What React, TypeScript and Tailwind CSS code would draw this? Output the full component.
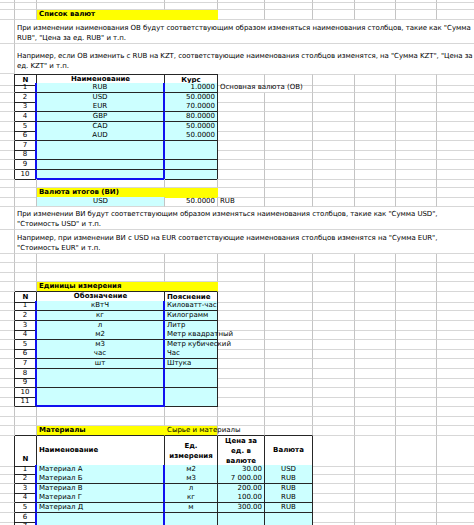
import React from 'react';
import { twMerge } from 'tailwind-merge';

const GRID = 'grid grid-cols-[15px_22px_128px_53px_47px_48px_42px_41px_41px_41px] w-[478px] shrink-0';
const BASE =
  'border-r border-b border-r-[#c4c4c4] border-b-[#d7d7d7] flex items-end px-[2px] whitespace-nowrap leading-[9px] min-w-0';

const DK_R = 'border-r-[#262626]';
const DK_B = 'border-b-[#262626]';
const BL_R = 'border-r-2 border-r-[#1010f0]';
const BL_B = 'border-b-2 border-b-[#1010f0]';
const CY = 'bg-[#ccffff]';
const YEL = 'bg-[#ffff00] border-r-[#ffff00] border-b-[#ffff00]';
const TOP_DK = 'border-t border-t-[#262626]';
const TOP_GR = 'border-t border-t-[#d7d7d7]';

type A = 'l' | 'c' | 'r';

function C({ c = '', a = 'l', children }: { c?: string; a?: A; children?: React.ReactNode }) {
  const j = a === 'c' ? 'justify-center' : a === 'r' ? 'justify-end' : 'justify-start';
  return <div className={twMerge(BASE, j, c)}>{children}</div>;
}

function Row({ h, children }: { h: string; children?: React.ReactNode }) {
  return <div className={twMerge(GRID, h)}>{children}</div>;
}

const fill = (n: number, c = '') =>
  Array.from({ length: n }, (_, i) => <C key={'f' + i} c={c} />);

const currencies: [string, string][] = [
  ['RUB', '1.0000'],
  ['USD', '50.0000'],
  ['EUR', '70.0000'],
  ['GBP', '80.0000'],
  ['CAD', '50.0000'],
  ['AUD', '50.0000'],
  ['', ''],
  ['', ''],
  ['', ''],
  ['', ''],
];

const units: [string, string][] = [
  ['кВтЧ', 'Киловатт-час'],
  ['кг', 'Килограмм'],
  ['л', 'Литр'],
  ['м2', 'Метр квадратный'],
  ['м3', 'Метр кубический'],
  ['час', 'Час'],
  ['шт', 'Штука'],
  ['', ''],
  ['', ''],
  ['', ''],
  ['', ''],
];

const mats: [string, string, string, string][] = [
  ['Материал А', 'м2', '30.00', 'USD'],
  ['Материал Б', 'м3', '7 000.00', 'RUB'],
  ['Материал В', 'л', '200.00', 'RUB'],
  ['Материал Г', 'кг', '100.00', 'RUB'],
  ['Материал Д', 'м', '300.00', 'RUB'],
  ['', '', '', ''],
  ['', '', '', ''],
];

export default function App() {
  return (
    <div className="w-[474px] h-[525px] overflow-hidden bg-white text-black font-['DejaVu_Sans',sans-serif] text-[7px] flex flex-col">
      <Row h="h-[3px]">{fill(10)}</Row>
      <Row h="h-[7px]">{fill(10)}</Row>
      <Row h="h-[9.6px]">
        <C />
        <C />
        <C c={twMerge(YEL, 'col-span-2 font-bold')}>Список валют</C>
        {fill(6)}
      </Row>
      <Row h="h-[24px]">
        <C />
        <C c="col-span-9 leading-[10px] tracking-[-0.05px]">
          <div>
            При изменении наименования ОВ будут соответствующим образом изменяться наименования столбцов, такие как "Сумма
            <br />
            RUB", "Цена за ед. RUB" и т.п.
          </div>
        </C>
      </Row>
      <Row h="h-[30px]">
        <C />
        <C c="col-span-9 leading-[10px] border-b-0 pb-[3px] overflow-hidden tracking-[-0.05px]">
          <div>
            Например, если ОВ изменить с RUB на KZT, соответствующие наименования столбцов изменятся, на "Сумма KZT", "Цена за
            <br />
            ед. KZT" и т.п.
          </div>
        </C>
      </Row>

      {/* Currency table header */}
      <Row h="h-[9.6px]">
        <C c={DK_R} />
        <C a="c" c={twMerge(TOP_DK, DK_R, DK_B, 'font-bold')}>N</C>
        <C a="c" c={twMerge(TOP_DK, DK_R, BL_B, 'font-bold')}>Наименование</C>
        <C a="c" c={twMerge(TOP_DK, DK_R, DK_B, 'font-bold')}>Курс</C>
        {fill(6, TOP_GR)}
      </Row>
      {currencies.map(([n, r], i) => (
        <Row key={'c' + i} h="h-[9.6px]">
          <C c={DK_R} />
          <C a="c" c={twMerge(BL_R, DK_B)}>{i + 1}</C>
          <C a="c" c={twMerge(CY, BL_R, i === currencies.length - 1 ? BL_B : DK_B)}>{n}</C>
          <C a="r" c={twMerge(CY, DK_R, DK_B)}>{r}</C>
          {i === 0 ? (
            <>
              <C c="col-span-2">Основная валюта (ОВ)</C>
              {fill(4)}
            </>
          ) : (
            fill(6)
          )}
        </Row>
      ))}
      <Row h="h-[8.6px]">{fill(10)}</Row>
      <Row h="h-[9.6px]">
        <C />
        <C />
        <C c={twMerge(YEL, 'col-span-2 font-bold')}>Валюта итогов (ВИ)</C>
        {fill(6)}
      </Row>
      <Row h="h-[9.6px]">
        <C />
        <C />
        <C a="c" c={CY}>USD</C>
        <C a="r">50.0000</C>
        <C>RUB</C>
        {fill(5)}
      </Row>
      <Row h="h-[22.6px]">
        <C />
        <C c="col-span-9 leading-[10px] tracking-[-0.05px]">
          <div>
            При изменении ВИ будут соответствующим образом изменяться наименования столбцов, такие как "Сумма USD",
            <br />
            "Стоимость USD" и т.п.
          </div>
        </C>
      </Row>
      <Row h="h-[24px]">
        <C />
        <C c="col-span-9 leading-[10px] tracking-[-0.05px]">
          <div>
            Например, при изменении ВИ с USD на EUR соответствующие наименования столбцов изменятся на "Сумма EUR",
            <br />
            "Стоимость EUR" и т.п.
          </div>
        </C>
      </Row>
      <Row h="h-[9.6px]">{fill(10)}</Row>
      <Row h="h-[9.6px]">{fill(10)}</Row>
      <Row h="h-[9.6px]">{fill(10)}</Row>

      {/* Units */}
      <Row h="h-[9.6px]">
        <C />
        <C c={DK_B} />
        <C c={twMerge(YEL, 'col-span-2 font-bold', DK_B)}>Единицы измерения</C>
        {fill(6)}
      </Row>
      <Row h="h-[9.6px]">
        <C c={DK_R} />
        <C a="c" c={twMerge(DK_R, DK_B, 'font-bold')}>N</C>
        <C a="c" c={twMerge(DK_R, BL_B, 'font-bold')}>Обозначение</C>
        <C c={twMerge(DK_R, DK_B, 'font-bold')}>Пояснение</C>
        {fill(6)}
      </Row>
      {units.map(([u, d], i) => (
        <Row key={'u' + i} h="h-[9.6px]">
          <C c={DK_R} />
          <C a="c" c={twMerge(BL_R, DK_B)}>{i + 1}</C>
          <C a="c" c={twMerge(CY, BL_R, i === units.length - 1 ? BL_B : DK_B)}>{u}</C>
          <C c={twMerge(CY, DK_R, DK_B)}>{d}</C>
          {fill(6)}
        </Row>
      ))}
      <Row h="h-[9.6px]">{fill(10)}</Row>
      <Row h="h-[9.6px]">{fill(10)}</Row>

      {/* Materials */}
      <Row h="h-[9.6px]">
        <C />
        <C c={DK_B} />
        <C c={twMerge(YEL, 'font-bold', DK_B)}>Материалы</C>
        <C c={twMerge(YEL, DK_B, 'border-r-[#c4c4c4]')}>Сырье и материалы</C>
        <C c={DK_B} />
        <C c={DK_B} />
        {fill(4)}
      </Row>
      <Row h="h-[28.8px]">
        <C c={DK_R} />
        <C a="c" c={twMerge(DK_R, DK_B, 'font-bold pb-[2px]')}>N</C>
        <C c={twMerge(DK_R, BL_B, 'font-bold items-center')}>Наименование</C>
        <C a="c" c={twMerge(DK_R, DK_B, 'font-bold items-center leading-[10px]')}>
          <div className="text-center">
            Ед.
            <br />
            измерения
          </div>
        </C>
        <C a="c" c={twMerge(DK_R, DK_B, 'font-bold items-center leading-[10px]')}>
          <div className="text-center">
            Цена за
            <br />
            ед. в
            <br />
            валюте
          </div>
        </C>
        <C a="c" c={twMerge(DK_R, DK_B, 'font-bold items-center')}>Валюта</C>
        {fill(4)}
      </Row>
      {mats.map(([n, u, p, cur], i) => (
        <Row key={'m' + i} h="h-[9.6px]">
          <C c={DK_R} />
          <C a="c" c={twMerge(BL_R, DK_B)}>{i + 1}</C>
          <C c={twMerge(CY, BL_R, DK_B)}>{n}</C>
          <C a="c" c={twMerge(CY, DK_R, DK_B)}>{u}</C>
          <C a="r" c={twMerge(CY, DK_R, DK_B)}>{p}</C>
          <C a="c" c={twMerge(CY, DK_R, DK_B)}>{cur}</C>
          {fill(4)}
        </Row>
      ))}
    </div>
  );
}
